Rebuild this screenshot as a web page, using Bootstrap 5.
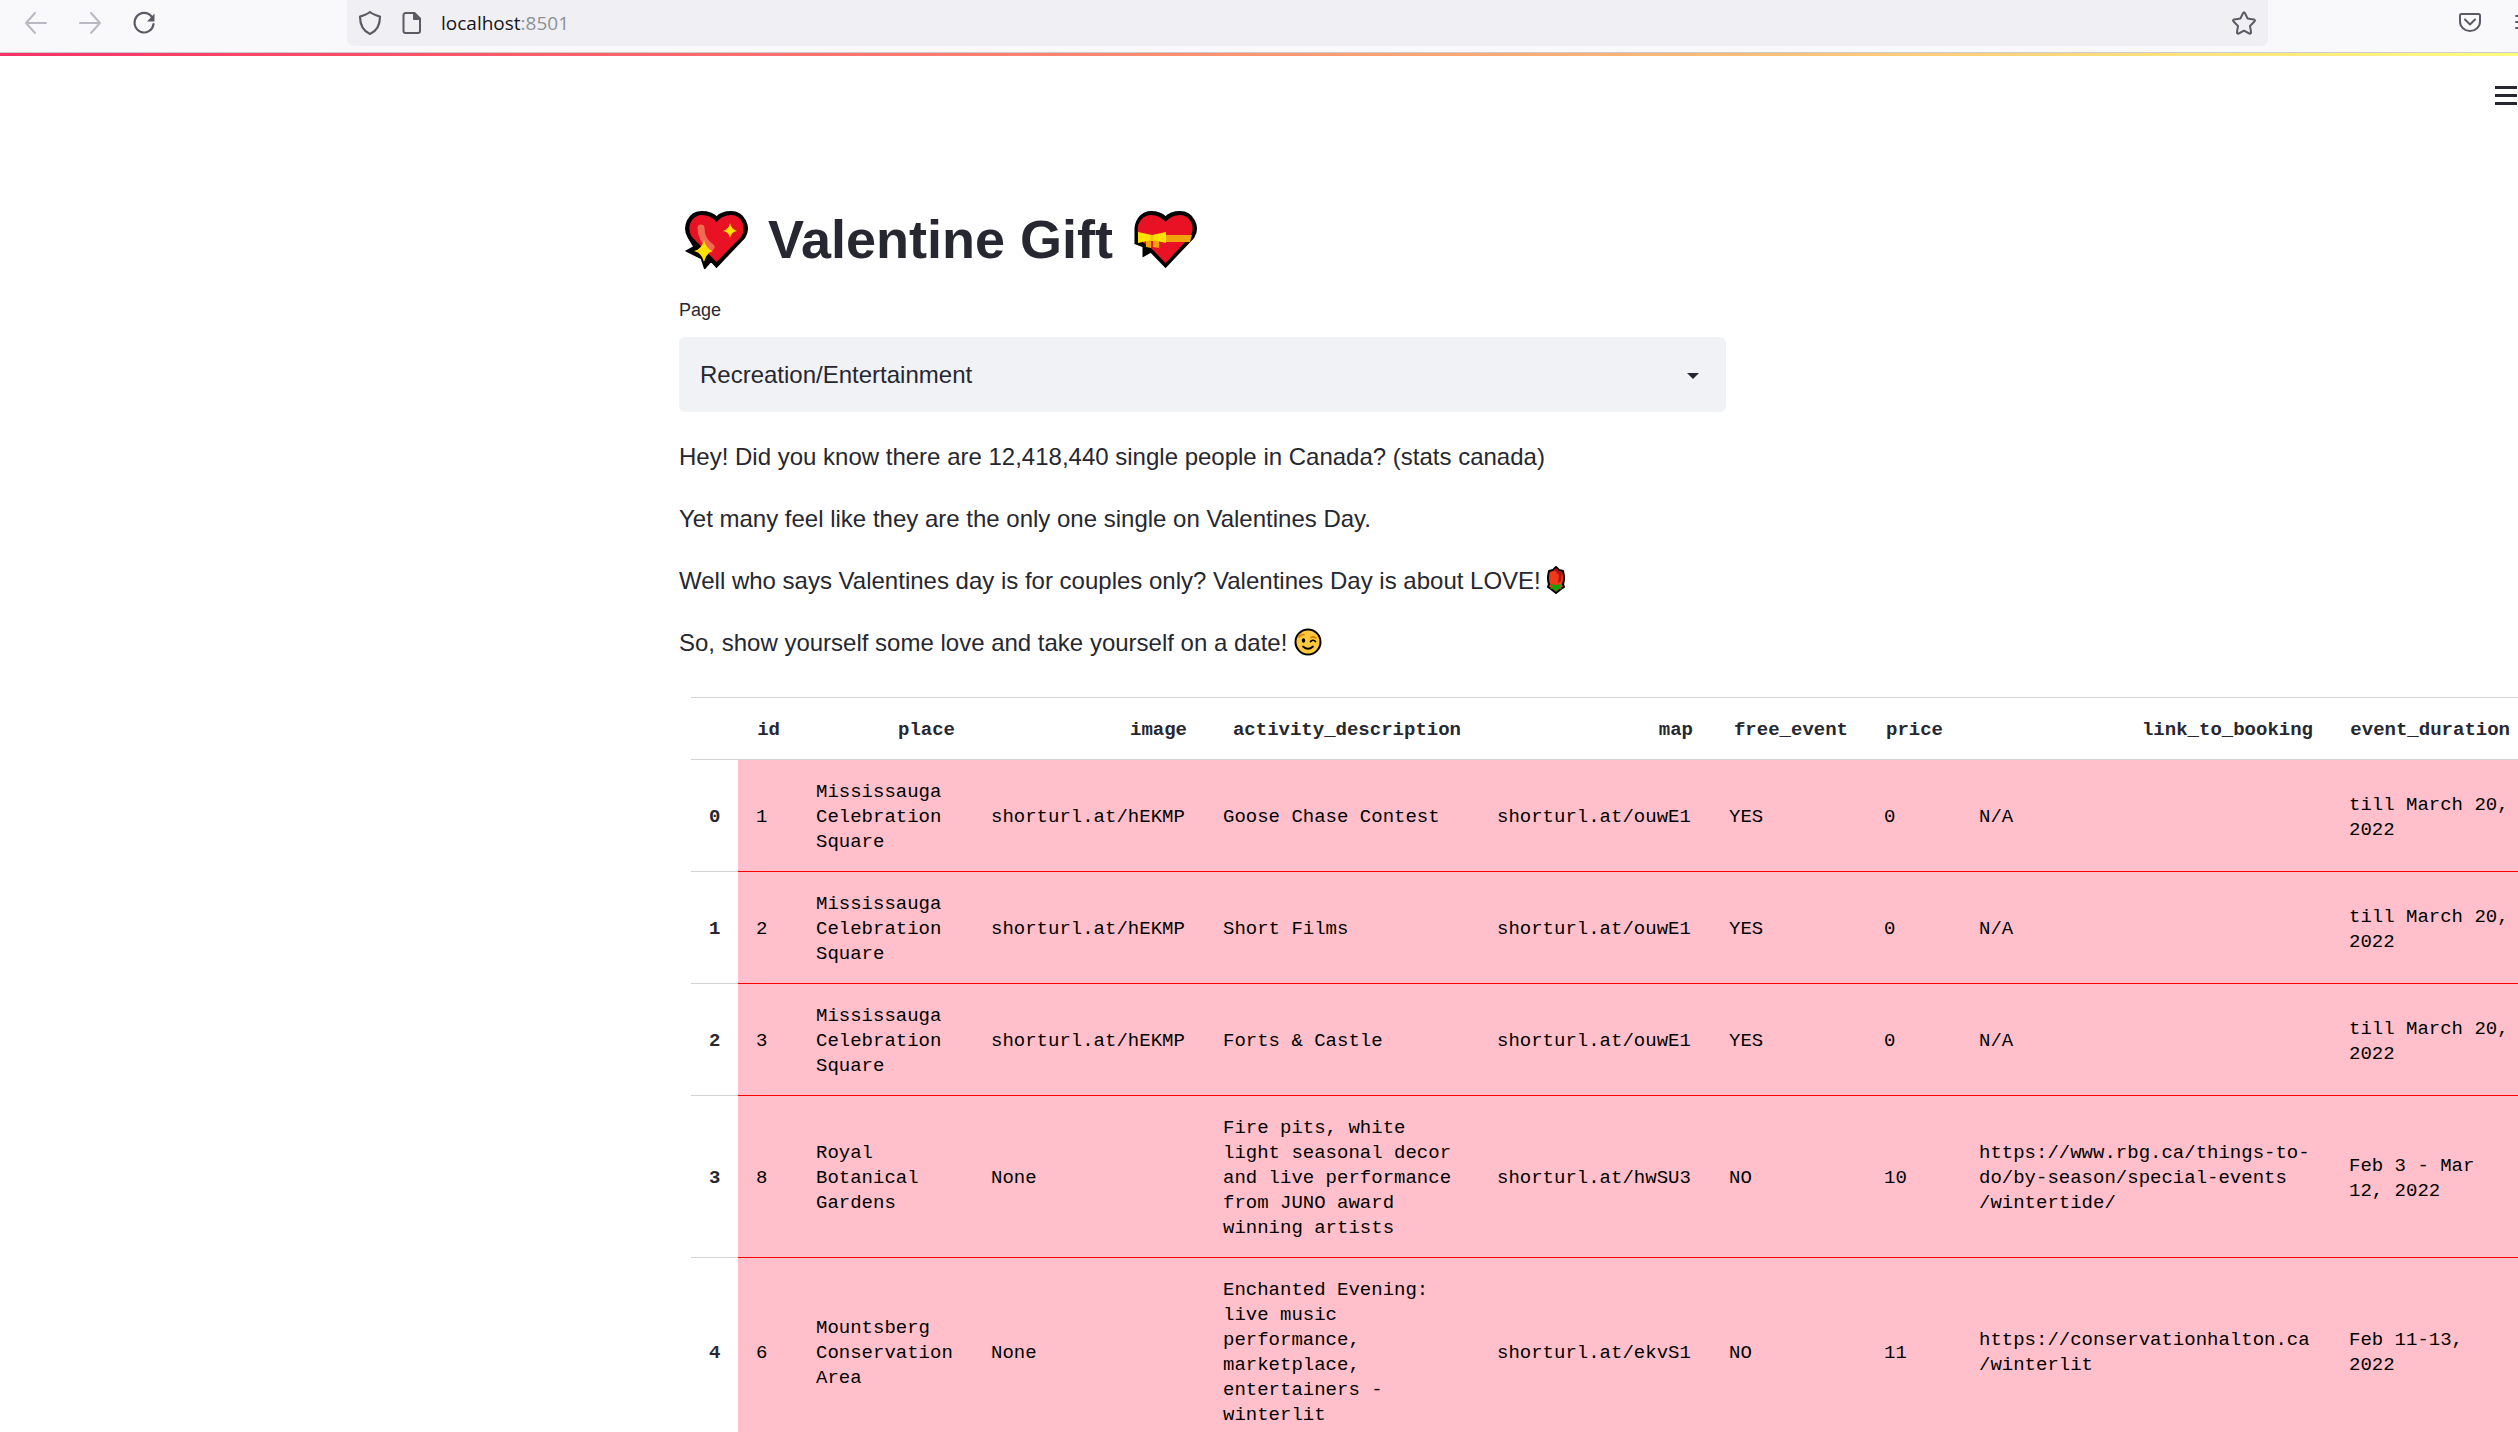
<!DOCTYPE html>
<html lang="en">
<head>
<meta charset="utf-8">
<meta name="viewport" content="width=device-width, initial-scale=1">
<title>Valentine Gift</title>
<link href="https://cdn.jsdelivr.net/npm/bootstrap@5.3.0/dist/css/bootstrap.min.css" rel="stylesheet">
<style>
  body { font-family: "Liberation Sans", Arial, sans-serif; font-size: 24px; line-height: 38px; color: #262730; background: #fff; overflow: hidden; }
  svg { display: block; flex: none; }

  /* Browser toolbar */
  .toolbar { height: 53px; background: #f9f9fb; border-bottom: 1px solid #ccccd0; }
  .tool-btn { border: 0; background: none; padding: 0; color: #5b5b66; }
  .tool-btn:disabled { color: #b9b9c1; }
  .nav-tools { width: 347px; padding: 11px 0 0 23px; gap: 30px; }
  .address { height: 46px; background: #f0f0f4; border-radius: 0 0 7px 7px; padding: 0 11px 0 10px; gap: 17px; color: #5b5b66; }
  .address-text { font-family: "Open Sans", sans-serif; font-size: 19px; line-height: 28px; color: #15141a; }
  .address-port { color: #8f8f98; }
  .end-tools { width: 250px; padding: 11px 0 0 190px; gap: 31px; }

  .rainbow { height: 3px; background: linear-gradient(90deg, #f63366, #ff806e 40%, #fbab74 60%, #fffd80); }

  /* App */
  .menu-row { height: 87px; padding: 28px 0 0; }
  .app-main { padding-right: 113px; }
  .app-block { max-width: 1047px; padding-top: 63px; }
  .app-title { font-size: 54px; line-height: 66px; font-weight: 700; gap: 18px; padding-left: 4px; margin: 0 0 24px; color: #262730; }
  .select-label { font-size: 18px; line-height: 29px; margin: 0 0 12px; display: block; }
  .select-box.form-select { height: 75px; padding: 0 60px 0 21px; font-size: 24px; color: #262730; background: #f0f2f6; border: 0; border-radius: 6px; }
  .select-caret { top: 36px; right: 27px; pointer-events: none; }
  .app-text { padding-top: 26px; }
  .app-text p { margin: 0 0 24px; }
  .app-text svg { display: inline-block; vertical-align: -5px; }

  /* Data table */
  .gift-table { width: 1837px; table-layout: fixed; margin: 35px 0 0 12px; font-family: "Liberation Mono", "Courier New", monospace; font-size: 19px; line-height: 25px; border-collapse: collapse; }
  .gift-table th, .gift-table td { padding: 20px 18px 16px; vertical-align: middle; }
  .gift-table thead th { border-top: 1px solid #d3d3d6; text-align: right; }
  .gift-table th { border-bottom: 1px solid #d3d3d6; font-weight: 700; white-space: nowrap; }
  .gift-table td { background: #ffc0cb; color: #000; border-bottom: 1px solid #f00; }
</style>
</head>
<body>
<header class="toolbar d-flex align-items-start">
  <nav class="nav-tools d-flex" aria-label="Browser">
    <button class="tool-btn" disabled aria-label="Back"><svg width="25" height="24" viewBox="0 0 25 24" fill="none" stroke="currentColor" stroke-width="2" stroke-linecap="round" stroke-linejoin="round"><path d="M23 12H3M12 2 3 12l9 10"/></svg></button>
    <button class="tool-btn" disabled aria-label="Forward"><svg width="25" height="24" viewBox="0 0 25 24" fill="none" stroke="currentColor" stroke-width="2" stroke-linecap="round" stroke-linejoin="round"><path d="M2 12h20M13 2l9 10-9 10"/></svg></button>
    <button class="tool-btn" aria-label="Reload"><svg width="25" height="24" viewBox="0 0 25 24"><path d="M18.500 5.500A9.500 9.800 0 1 0 20.500 13" fill="none" stroke="currentColor" stroke-width="2.200" stroke-linecap="round"/><path d="M21.500 2.500v8h-7.500z" fill="currentColor"/></svg></button>
  </nav>
  <div class="address flex-grow-1 d-flex align-items-center">
    <svg width="26" height="26" viewBox="0 0 26 26" fill="none" stroke="currentColor" stroke-width="2.200" stroke-linejoin="round"><path d="M13 2C10 4.500 6.500 5.500 3 6.500 3 14 5 20.500 13 24c8-3.500 10-10 10-17.500C19.500 5.500 16 4.500 13 2z"/></svg>
    <svg width="24" height="24" viewBox="0 0 24 24"><path d="M5.500 2h9L20 7.500V20a2 2 0 0 1-2 2H5.500a2 2 0 0 1-2-2V4a2 2 0 0 1 2-2z" fill="none" stroke="currentColor" stroke-width="2"/><path d="M13.500 2v6.500H20z" fill="currentColor" stroke="currentColor"/></svg>
    <div class="address-text flex-grow-1">localhost<span class="address-port">:8501</span></div>
    <button class="tool-btn" aria-label="Bookmark"><svg width="26" height="26" viewBox="0 0 26 26" fill="none" stroke="currentColor" stroke-width="2" stroke-linejoin="round"><path d="M12 3.200q1-2 2 0L16.600 8.500 22.800 9.500q2 .5.6 2L19 16l1 6.200q.1 2-1.700 1.300L13 20.700l-5.300 2.800q-1.800.7-1.700-1.300L7 16l-4.400-4.500q-1.400-1.500.6-2L9.400 8.500z"/></svg></button>
  </div>
  <div class="end-tools d-flex flex-nowrap">
    <button class="tool-btn" aria-label="Save to Pocket"><svg width="24" height="22" viewBox="0 0 24 22" fill="none" stroke="currentColor" stroke-width="2" stroke-linecap="round" stroke-linejoin="round"><path d="M3.500 3h17a1.500 1.500 0 0 1 1.500 1.500V10.500a10 9.500 0 0 1-20 0V4.500A1.500 1.500 0 0 1 3.500 3z"/><path d="M7 8.500l5 5 5-5"/></svg></button>
    <button class="tool-btn" aria-label="Application menu"><svg width="22" height="20" viewBox="0 0 22 20" stroke="currentColor" stroke-width="2" stroke-linecap="round"><path d="M3 4h18M3 10h18M3 16h18"/></svg></button>
  </div>
</header>
<div class="rainbow"></div>

<div class="menu-row d-flex justify-content-end align-items-start">
  <button class="tool-btn" aria-label="Main menu"><svg width="23" height="24" viewBox="0 0 23 24" fill="#262730"><path d="M0 2h22v3H0zM0 10h22v3H0zM0 18h22v3H0z"/></svg></button>
</div>

<main class="app-main">
  <div class="app-block mx-auto">
    <h1 class="app-title d-flex align-items-center">
      <svg width="67" height="60" viewBox="-2 0 67 60" role="img" aria-label="Sparkling heart">
        <path d="M31.500 57 26 51l-6 7-3-9L3 42l7-4-6-10C-2 18 4 3.500 17 3.500c6 0 11 2 14.500 5.500 3.500-3.500 8.500-5.500 14.500-5.500 13 0 19 15 13 24.500z" fill="#000" stroke="#000" stroke-width="3"/>
        <path d="M31.500 53 7 28C1 19 6 6 17 6c6 0 11 3 14.500 7C35 9 40 6 46 6c11 0 16 13 10 22z" fill="#e81224"/>
        <path d="M16 19c0 9 3 14 10 19" fill="none" stroke="#f06b52" stroke-width="7" stroke-linecap="round"/>
        <path d="M19 31q2 9 9 11-7 2-9 11-2-9-10-11 8-2 10-11zM45 14q1 6 7 8-6 1-7 7-1-6-7-7 6-2 7-8z" fill="#ffe100"/>
      </svg>
      <span>Valentine Gift</span>
      <svg width="67" height="60" viewBox="-3 0 67 60" role="img" aria-label="Heart with ribbon">
        <path d="M31.500 57 17 42l-7 4V37l-8-3V19C3 10 9 3.500 17 3.500c6 0 11 2 14.500 5.500 3.500-3.500 8.500-5.500 14.500-5.500 13 0 19 15 13 24.500z" fill="#000" stroke="#000" stroke-width="3"/>
        <path d="M31.500 54 17 39 7 32 4 25C2 15 8 6 17 6c6 0 11 3 14.500 7C35 9 40 6 46 6c11 0 16 13 10 22z" fill="#e81224"/>
        <path d="M31 26h27l-2 7H31zM12 31h5v8l-5-1zM19 31h6v8l-6-1z" fill="#f0a30a"/>
        <path d="M4 23l14 3 14-3v11l-14-3-14 3z" fill="#ffe100"/>
        <path d="M16 26h4v6h-4z" fill="#f8c80a"/>
      </svg>
    </h1>

    <label class="select-label" for="page">Page</label>
    <div class="position-relative">
      <select class="select-box form-select" id="page"><option>Recreation/Entertainment</option></select>
      <svg class="select-caret position-absolute" width="12" height="6" viewBox="0 0 12 6" fill="#262730" aria-hidden="true"><path d="M0 0h12L6 6z"/></svg>
    </div>

    <div class="app-text">
      <p>Hey! Did you know there are 12,418,440 single people in Canada? (stats canada)</p>
      <p>Yet many feel like they are the only one single on Valentines Day.</p>
      <p>Well who says Valentines day is for couples only? Valentines Day is about LOVE! <svg width="18" height="28" viewBox="1 0 18 28" role="img" aria-label="Rose"><path d="M3 5l4-1 3-3 3 3 4 1q2 8 0 13l1 3-3 2-5 4-5-4-3-2 1-3Q1 13 3 5z" fill="#f03a17" stroke="#000" stroke-width="2" stroke-linejoin="round"/><path d="M8 4l2-2 3 3 3 1-1 9-3 2 1-8z" fill="#b3101c"/><path d="M4 18l6 1 6-1-2 3 2 2-4 0-2 3-2-3-4 0 2-2z" fill="#13a10e"/></svg></p>
      <p>So, show yourself some love and take yourself on a date! <svg width="28" height="28" viewBox="0 0 28 28" role="img" aria-label="Winking face"><circle cx="14" cy="14" r="12.500" fill="#ffc83d" stroke="#000" stroke-width="2"/><ellipse cx="9.500" cy="12.500" rx="1.700" ry="2.300"/><path d="M16.500 13.500q3-2.500 5 0M9 18.500q5 4.500 10 0" fill="none" stroke="#000" stroke-width="1.700" stroke-linecap="round"/><path d="M5 9q1.500-2.500 5-2.500M17 9.500q2-1.500 5 .5" fill="none" stroke="#d67d00" stroke-width="1.600" stroke-linecap="round"/></svg></p>
    </div>

    <table class="gift-table">
      <colgroup><col style="width:47px"><col style="width:60px"><col style="width:175px"><col style="width:232px"><col style="width:274px"><col style="width:232px"><col style="width:155px"><col style="width:95px"><col style="width:370px"><col style="width:197px"></colgroup>
      <thead>
        <tr><th></th><th>id</th><th>place</th><th>image</th><th>activity_description</th><th>map</th><th>free_event</th><th>price</th><th>link_to_booking</th><th>event_duration</th></tr>
      </thead>
      <tbody>
        <tr><th>0</th><td>1</td><td>Mississauga Celebration Square</td><td>shorturl.at/hEKMP</td><td>Goose Chase Contest</td><td>shorturl.at/ouwE1</td><td>YES</td><td>0</td><td>N/A</td><td>till March 20, 2022</td></tr>
        <tr><th>1</th><td>2</td><td>Mississauga Celebration Square</td><td>shorturl.at/hEKMP</td><td>Short Films</td><td>shorturl.at/ouwE1</td><td>YES</td><td>0</td><td>N/A</td><td>till March 20, 2022</td></tr>
        <tr><th>2</th><td>3</td><td>Mississauga Celebration Square</td><td>shorturl.at/hEKMP</td><td>Forts &amp; Castle</td><td>shorturl.at/ouwE1</td><td>YES</td><td>0</td><td>N/A</td><td>till March 20, 2022</td></tr>
        <tr><th>3</th><td>8</td><td>Royal Botanical Gardens</td><td>None</td><td>Fire pits, white light seasonal decor and live performance from JUNO award winning artists</td><td>shorturl.at/hwSU3</td><td>NO</td><td>10</td><td>https://www.rbg.ca/things-to-<br>do/by-season/special-events<br>/wintertide/</td><td>Feb 3 - Mar 12, 2022</td></tr>
        <tr><th>4</th><td>6</td><td>Mountsberg Conservation Area</td><td>None</td><td>Enchanted Evening: live music performance, marketplace, entertainers - winterlit</td><td>shorturl.at/ekvS1</td><td>NO</td><td>11</td><td>https://conservationhalton.ca<br>/winterlit</td><td>Feb 11-13, 2022</td></tr>
      </tbody>
    </table>
  </div>
</main>
<script src="https://cdn.jsdelivr.net/npm/bootstrap@5.3.0/dist/js/bootstrap.bundle.min.js"></script>
</body>
</html>
